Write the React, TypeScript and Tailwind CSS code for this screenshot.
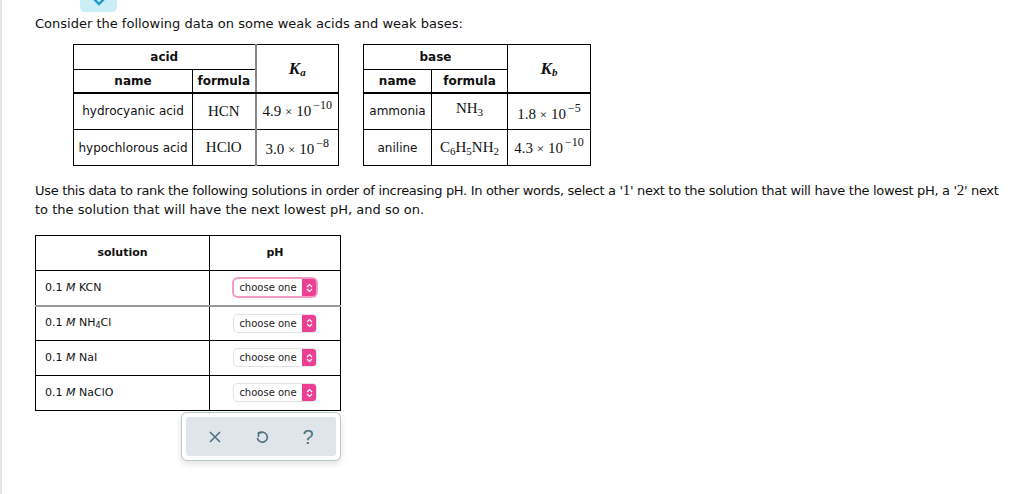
const sans = "font-['DejaVu_Sans','Liberation_Sans',sans-serif]";
const serif = "font-['Liberation_Serif','DejaVu_Serif',serif]";

function Sci({ m, e }: { m: string; e: string }) {
  return (
    <span className={`${serif} text-[15px] whitespace-nowrap`}>
      {m} <span className="text-[13px]">×</span> 10
      <span className="relative -top-[7px] text-[12px] ml-[2px]">−{e}</span>
    </span>
  );
}

function Choose({ focused }: { focused?: boolean }) {
  return (
    <div
      className={`inline-flex h-[17px] w-[82px] items-stretch rounded-[4px] bg-white ${
        focused ? "ring-2 ring-[#f39ac4]" : "shadow-[0_0_0_1px_#e2e2e2]"
      }`}
    >
      <span className={`${sans} flex flex-1 items-center justify-center text-[10px] text-[#222]`}>choose one</span>
      <span className="flex w-[14px] items-center justify-center rounded-r-[3px] bg-[#ec3f94]">
        <svg width="7" height="10" viewBox="0 0 7 10" fill="none" stroke="white" strokeWidth="1.2">
          <path d="M1 4 L3.5 1.5 L6 4" />
          <path d="M1 6 L3.5 8.5 L6 6" />
        </svg>
      </span>
    </div>
  );
}

const rows = [
  { label: <>KCN</>, focused: true },
  { label: <>NH<sub className="text-[8px]">4</sub>Cl</> },
  { label: <>NaI</> },
  { label: <>NaClO</> },
];

export default function App() {
  return (
    <div className={`${sans} relative h-[494px] w-[1024px] overflow-hidden border-l-2 border-[#e6e6e6] bg-white text-[#111]`}>
      <div className="absolute left-[78px] top-0 flex h-[12px] w-[37px] items-start justify-center rounded-b-[5px] bg-[#c9eef5]">
        <svg width="16" height="8" viewBox="0 0 16 8" fill="none" stroke="#2596c9" strokeWidth="2.4">
          <path d="M2 -2 L8 4 L14 -2" />
        </svg>
      </div>

      <div className="pl-[33px] pt-[14px]">
        <p className="text-[13px] leading-[19px]">Consider the following data on some weak acids and weak bases:</p>

        <div className="mt-[11px] ml-[38px] flex gap-[24px] text-center">
          <table className="border-collapse border border-black">
            <tbody>
              <tr>
                <th colSpan={2} className="h-[25px] border-b border-black text-[12px] font-bold">acid</th>
                <th rowSpan={2} className="w-[83px] border-l-2 border-l-[#888] border-b-2 border-b-black">
                  <span className={`${serif} text-[17px] italic`}>K</span>
                  <sub className={`${serif} text-[11px] italic`}>a</sub>
                </th>
              </tr>
              <tr>
                <th className="h-[23px] w-[119px] border-r border-black border-b-2 border-b-black text-[12px] font-bold">name</th>
                <th className="w-[63px] border-b-2 border-black text-[12px] font-bold">formula</th>
              </tr>
              <tr>
                <td className="h-[37px] border-r border-b border-black text-[12px]">hydrocyanic acid</td>
                <td className={`${serif} border-r border-b border-black text-[15px]`}>HCN</td>
                <td className="border-b border-black border-l-2 border-l-[#888]"><Sci m="4.9" e="10" /></td>
              </tr>
              <tr>
                <td className="h-[36px] border-r border-black text-[12px]">hypochlorous acid</td>
                <td className={`${serif} border-r border-black text-[15px]`}>HClO</td>
                <td className="border-l-2 border-l-[#888] pt-[3px]"><Sci m="3.0" e="8" /></td>
              </tr>
            </tbody>
          </table>

          <table className="border-collapse border border-black">
            <tbody>
              <tr>
                <th colSpan={2} className="h-[25px] border-b border-black text-[12px] font-bold">base</th>
                <th rowSpan={2} className="w-[83px] border-l border-black border-b-2 border-b-black">
                  <span className={`${serif} text-[17px] italic`}>K</span>
                  <sub className={`${serif} text-[11px] italic`}>b</sub>
                </th>
              </tr>
              <tr>
                <th className="h-[23px] w-[68px] border-r border-black border-b-2 border-b-black text-[12px] font-bold">name</th>
                <th className="w-[76px] border-b-2 border-black text-[12px] font-bold">formula</th>
              </tr>
              <tr>
                <td className="h-[37px] border-r border-b border-black text-[12px]">ammonia</td>
                <td className={`${serif} border-r border-b border-black pb-[6px] text-[15px]`}>
                  NH<sub className="text-[11px]">3</sub>
                </td>
                <td className="border-b border-black pt-[5px]"><Sci m="1.8" e="5" /></td>
              </tr>
              <tr>
                <td className="h-[36px] border-r border-black text-[12px]">aniline</td>
                <td className={`${serif} border-r border-black text-[15px] whitespace-nowrap`}>
                  C<sub className="text-[11px]">6</sub>H<sub className="text-[11px]">5</sub>NH<sub className="text-[11px]">2</sub>
                </td>
                <td><Sci m="4.3" e="10" /></td>
              </tr>
            </tbody>
          </table>
        </div>

        <p className="mt-[15px] text-[13px] leading-[19px]">
          <span className="whitespace-nowrap tracking-[-0.32px]">
            Use this data to rank the following solutions in order of increasing pH. In other words, select a '
            <span className={`${serif} text-[15px]`}>1</span>' next to the solution that will have the lowest pH, a '
            <span className={`${serif} text-[15px]`}>2</span>' next
          </span>
          <br />
          to the solution that will have the next lowest pH, and so on.
        </p>

        <table className="mt-[16px] border-collapse border border-black text-[11px]">
          <tbody>
            <tr>
              <th className="h-[35px] w-[174px] border-r border-b border-black font-bold">solution</th>
              <th className="w-[131px] border-b border-black font-bold">pH</th>
            </tr>
            {rows.map((r, i) => (
              <tr key={i} className={i === 0 ? "border-b-2 border-[#999]" : i < 3 ? "border-b border-black" : ""}>
                <td className="h-[35px] border-r border-black pl-[9px] text-left">
                  0.1 <i>M</i> {r.label}
                </td>
                <td className="text-center">
                  <Choose focused={r.focused} />
                </td>
              </tr>
            ))}
          </tbody>
        </table>

        <div className="ml-[146px] mt-[1px] w-[160px] rounded-[6px] border border-[#b9c6cc] bg-white p-[4px] shadow-[0_3px_6px_rgba(0,0,0,0.12)]">
          <div className="flex h-[39px] items-center justify-around rounded-[3px] bg-[#dfe5e8] px-[6px] text-[#4f7181]">
            <svg width="14" height="14" viewBox="0 0 14 14" stroke="currentColor" strokeWidth="1.6">
              <path d="M2 2 L12 12 M12 2 L2 12" />
            </svg>
            <svg width="14" height="16" viewBox="0 0 14 16" fill="none" stroke="currentColor" strokeWidth="1.6" strokeLinecap="round" strokeLinejoin="round">
              <path d="M3.5 7.5 V3.5 H7" />
              <path d="M4.2 4.2 A5 5 0 1 1 2.5 9.5" />
            </svg>
            <span className="font-['Liberation_Sans',sans-serif] text-[20px] leading-none">?</span>
          </div>
        </div>
      </div>
    </div>
  );
}
